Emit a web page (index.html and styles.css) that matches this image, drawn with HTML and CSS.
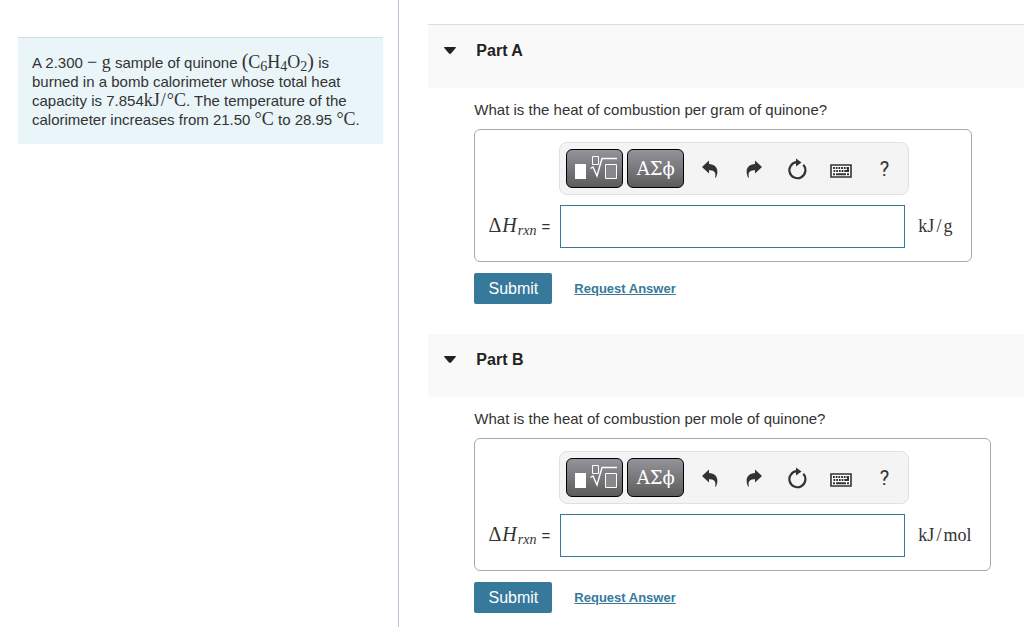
FILE: index.html
```html
<!DOCTYPE html>
<html lang="en">
<head>
<meta charset="utf-8">
<title>Heat of combustion of quinone</title>
<link rel="stylesheet" href="styles.css">
</head>
<body>
<svg class="sprite" aria-hidden="true">
  <symbol id="i-template" viewBox="0 0 54 36">
    <path d="M8 14h11v15H8z" fill="#fff"/>
    <path d="M25.500 6.500h6v8h-6z" fill="none" stroke="#fff"/>
    <path d="M23.500 18.500l2.500-1.500 4 9L35 8.500h15" fill="none" stroke="#fff" stroke-width="1.400"/>
    <path d="M38.500 14.500h11v14h-11z" fill="#88878b" stroke="#fff"/>
  </symbol>
  <symbol id="i-undo" viewBox="0 0 18 18">
    <path d="M1 7L8 .5V4c7 .3 10.500 5.500 7 13.500h-1C15.500 12.500 13 10.300 8 10.300v3.200z"/>
  </symbol>
  <symbol id="i-redo" viewBox="0 0 18 18">
    <path d="M17 7L10 .5V4C3 4.300-.5 9.500 3 17.500h1C2.500 12.500 5 10.300 10 10.300v3.200z"/>
  </symbol>
  <symbol id="i-reset" viewBox="0 0 20 22">
    <path d="M16.300 6.800A8 8 0 1 1 10 4.200" fill="none" stroke="currentColor" stroke-width="2.200"/>
    <path d="M9 .5l5.500 4L9 8.500z"/>
  </symbol>
  <symbol id="i-keyboard" viewBox="0 0 22 14">
    <path d="M1 1h20v12H1z" fill="#fff" stroke="currentColor" stroke-width="1.600"/>
    <path d="M3 4h16M3.500 7H16" fill="none" stroke="currentColor" stroke-width="1.800" stroke-dasharray="1.800 .9"/>
    <path d="M17 3h2v5h-3V6h1zM3 9.300h2v2H3zM6 9.300h10v2H6zM17 9.300h2v2h-2z"/>
  </symbol>
</svg>
<main class="page">
  <aside class="side">
    <p class="problem">A 2.300 <span class="tex"><span class="minus">&minus;</span> g</span> sample of quinone <span class="tex"><span class="paren">(</span>C<sub>6</sub>H<sub>4</sub>O<sub>2</sub><span class="paren">)</span></span> is<br>burned in a bomb calorimeter whose total heat<br>capacity is 7.854<span class="tex">kJ<span class="slash">/</span><span class="deg">°</span>C</span>. The temperature of the<br>calorimeter increases from 21.50 <span class="tex"><span class="deg">°</span>C</span> to 28.95 <span class="tex"><span class="deg">°</span>C</span>.</p>
  </aside>
  <div class="parts">
    <section class="part">
      <h2 class="part-head"><button class="toggle" type="button" aria-expanded="true"><svg class="caret" viewBox="0 0 12 7"><path d="M.5 0h11q.8.5 0 1.200L7 6.500q-1 .8-2 0L.5 1.200Q-.3.500.5 0z"/></svg>Part A</button></h2>
      <form class="part-body">
        <p class="question">What is the heat of combustion per gram of quinone?</p>
        <div class="answer">
          <div class="toolbar">
            <button class="key" type="button" aria-label="Templates"><svg><use href="#i-template" width="54" height="36"/></svg></button>
            <button class="key greek" type="button">ΑΣϕ</button>
            <button class="tool" type="button" aria-label="Undo"><svg width="18" height="18"><use href="#i-undo"/></svg></button>
            <button class="tool" type="button" aria-label="Redo"><svg width="18" height="18"><use href="#i-redo"/></svg></button>
            <button class="tool" type="button" aria-label="Reset"><svg width="20" height="22"><use href="#i-reset"/></svg></button>
            <button class="tool kbd" type="button" aria-label="Keyboard shortcuts"><svg width="22" height="14"><use href="#i-keyboard"/></svg></button>
            <button class="tool" type="button">?</button>
          </div>
          <label class="symbol" for="a"><span class="tex">Δ<i class="var">H</i><sub><i>rxn</i></sub></span> =</label>
          <input class="entry" id="a" type="text">
          <span class="unit tex">kJ<span class="slash">/</span>g</span>
        </div>
        <div class="actions"><button class="submit" type="submit">Submit</button><a class="request" href="#">Request Answer</a></div>
      </form>
    </section>
    <section class="part">
      <h2 class="part-head"><button class="toggle" type="button" aria-expanded="true"><svg class="caret" viewBox="0 0 12 7"><path d="M.5 0h11q.8.5 0 1.200L7 6.500q-1 .8-2 0L.5 1.200Q-.3.500.5 0z"/></svg>Part B</button></h2>
      <form class="part-body">
        <p class="question">What is the heat of combustion per mole of quinone?</p>
        <div class="answer">
          <div class="toolbar">
            <button class="key" type="button" aria-label="Templates"><svg><use href="#i-template" width="54" height="36"/></svg></button>
            <button class="key greek" type="button">ΑΣϕ</button>
            <button class="tool" type="button" aria-label="Undo"><svg width="18" height="18"><use href="#i-undo"/></svg></button>
            <button class="tool" type="button" aria-label="Redo"><svg width="18" height="18"><use href="#i-redo"/></svg></button>
            <button class="tool" type="button" aria-label="Reset"><svg width="20" height="22"><use href="#i-reset"/></svg></button>
            <button class="tool kbd" type="button" aria-label="Keyboard shortcuts"><svg width="22" height="14"><use href="#i-keyboard"/></svg></button>
            <button class="tool" type="button">?</button>
          </div>
          <label class="symbol" for="b"><span class="tex">Δ<i class="var">H</i><sub><i>rxn</i></sub></span> =</label>
          <input class="entry" id="b" type="text">
          <span class="unit tex">kJ<span class="slash">/</span>mol</span>
        </div>
        <div class="actions"><button class="submit" type="submit">Submit</button><a class="request" href="#">Request Answer</a></div>
      </form>
    </section>
  </div>
</main>
</body>
</html>
```
FILE: styles.css
```css
* { box-sizing: border-box; }
body {
  margin: 0;
  background: #fff;
  color: #333;
  font: 15px/19px "Liberation Sans", Arial, sans-serif;
}
p, h2 { margin: 0; }
button { font: inherit; color: inherit; border: 0; background: none; padding: 0; }
.sprite { display: none; }
svg { fill: currentColor; display: block; }

.page { display: grid; grid-template-columns: 39% minmax(0, 1fr); min-height: 100vh; }
.side { border-right: 1px solid #b4c4d6; padding: 37px 15px 0 18px; }
.problem {
  background: #e9f5f8;
  border-top: 1px solid #d3dddf;
  padding: 15px 14px;
  white-space: nowrap;
}
.tex { font-family: "Liberation Serif", "Times New Roman", serif; font-size: 18px; line-height: 0; }
.tex sub { font-size: 14px; line-height: 0; vertical-align: -3px; }
.paren { font-size: 20px; }
.slash { padding: 0 1px; }
.deg { font-size: 18px; }

.parts { padding: 24px 0 0 29px; }
.part { margin-bottom: 30px; }
.part-head { background: #f9f9f9; height: 63px; padding: 16px; }
.part:first-child .part-head { border-top: 1px solid #ddd; height: 64px; }
.toggle { display: flex; align-items: center; gap: 20px; font-size: 16px; font-weight: 700; color: #222; }
.caret { width: 12px; height: 7px; }
.part-body { padding: 12px 0 0 46px; }
.question { margin-bottom: 10px; }

.answer {
  display: grid;
  grid-template-columns: 64px 345px auto;
  align-items: center;
  gap: 10px;
  width: fit-content;
  padding: 12px 19px 13px 11px;
  border: 1px solid #aaa;
  border-radius: 6px;
}
.toolbar {
  grid-column: 2;
  display: flex;
  align-items: center;
  width: 350px;
  height: 53px;
  margin-left: -1px;
  padding: 0 2px 0 6px;
  background: #f4f4f4;
  border: 1px solid #e0e0e0;
  border-radius: 8px;
}
.key {
  flex: none;
  width: 57px;
  height: 39px;
  margin-right: 4px;
  border: 1px solid #000;
  border-radius: 6px;
  background: linear-gradient(#95939b, #5c5c5c);
  color: #fff;
}
.key svg { width: 100%; height: 100%; }
.greek { font: 18px/1 "DejaVu Serif", serif; }
.tool { flex: 1; height: 39px; display: grid; place-items: center; font: 20px/1 Roboto, sans-serif; }
.kbd { padding-top: 4px; }
.symbol { grid-column: 1; text-align: right; white-space: nowrap; }
.symbol .tex { font-size: 20px; padding-right: 1px; }
.var { padding: 0 1px; }
.entry { width: 100%; height: 43px; padding: 0 8px; border: 1px solid #36799b; font: inherit; background: #fff; }
.unit { margin-left: 3px; line-height: 19px; }
.unit .slash { padding: 0 2px; }

.actions { display: flex; align-items: center; gap: 22px; margin-top: 11px; }
.submit { width: 78px; height: 31px; border-radius: 2px; background: #36799b; color: #fff; font-size: 16px; }
.request { color: #36799b; font-size: 13px; font-weight: 700; line-height: 15px; padding-bottom: 1px; }
```
